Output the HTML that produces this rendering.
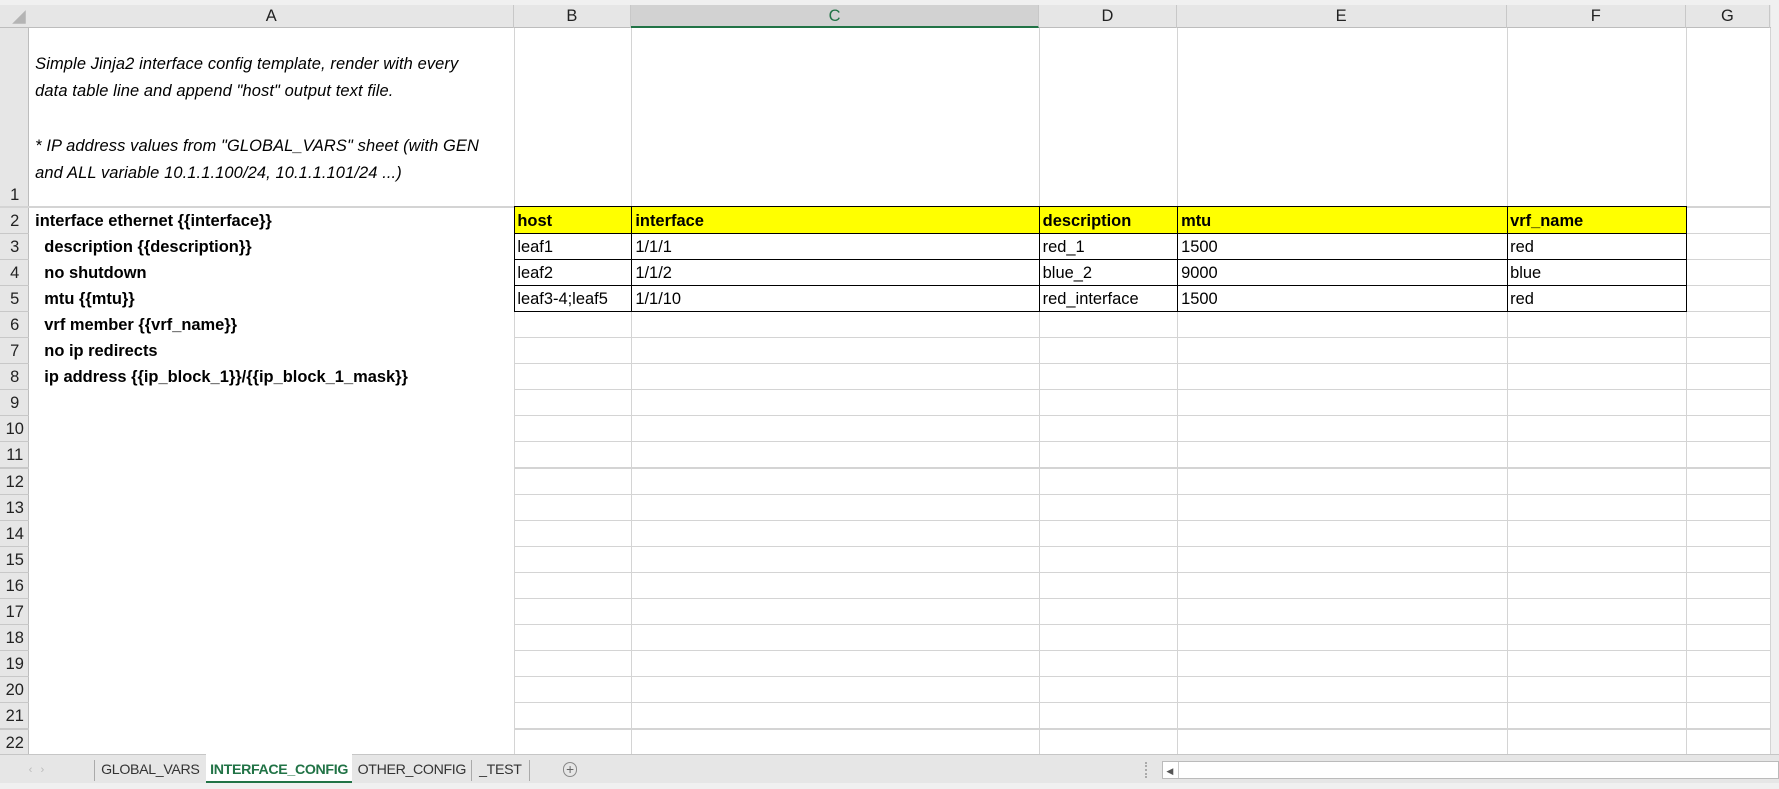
<!DOCTYPE html>
<html><head><meta charset="utf-8"><style>
html,body{margin:0;padding:0;background:#fff;overflow:hidden}
#w{position:relative;width:1568px;height:695px;zoom:1.13457;font-family:"Liberation Sans",sans-serif;font-size:14.5px;color:#000;overflow:hidden}
.a{position:absolute;box-sizing:border-box}
.vl{position:absolute;width:1px;background:#d4d4d4}
.hl{position:absolute;height:1px;background:#d4d4d4}
.rh{position:absolute;left:0;width:26px;text-align:center;font-size:14.5px;color:#222;line-height:23px}
.ch{position:absolute;top:4px;height:21px;line-height:21px;text-align:center;font-size:14.5px;color:#222;border-right:1px solid #c8c8c8;box-sizing:border-box}
.t{position:absolute;white-space:nowrap;line-height:23px}
.b{font-weight:bold}
.tab{position:absolute;top:668px;height:22px;line-height:22px;font-size:12.5px;color:#333;text-align:center;letter-spacing:-0.3px}
</style></head><body><div id="w">
<div class="a" style="left:0;top:0;width:1568px;height:4px;background:#f0f0f0"></div>
<div class="a" style="left:0;top:4px;width:1568px;height:21px;background:#e6e6e6;border-bottom:1px solid #bdbdbd"></div>
<div class="a" style="left:0;top:25px;width:26px;height:640px;background:#e6e6e6;border-right:1px solid #bdbdbd"></div>
<svg class="a" style="left:10px;top:8px" width="14" height="14"><polygon points="13,1 13,13 1,13" fill="#b4b4b4"/></svg>
<div class="ch" style="left:26px;width:427px">A</div>
<div class="ch" style="left:453px;width:103px">B</div>
<div class="ch" style="left:556px;width:360px;background:#d2d2d2;color:#217346;border-bottom:2px solid #217346">C</div>
<div class="ch" style="left:916px;width:121px">D</div>
<div class="ch" style="left:1037px;width:291px">E</div>
<div class="ch" style="left:1328px;width:158px">F</div>
<div class="ch" style="left:1486px;width:74px">G</div>
<div class="vl" style="left:453px;top:25px;height:640px"></div>
<div class="vl" style="left:556px;top:25px;height:640px"></div>
<div class="vl" style="left:916px;top:25px;height:640px"></div>
<div class="vl" style="left:1037px;top:25px;height:640px"></div>
<div class="vl" style="left:1328px;top:25px;height:640px"></div>
<div class="vl" style="left:1486px;top:25px;height:640px"></div>
<div class="vl" style="left:1560px;top:25px;height:640px"></div>
<div class="a" style="left:1561px;top:0;width:7px;height:695px;background:#f0f0f0"></div>
<div class="hl" style="left:0;top:182px;width:1560px"></div>
<div id="rows"></div>
<script>
var h='';for(var i=2;i<=22;i++){var y=182+(i-2)*23;h+='<div class="hl" style="left:453px;top:'+(y+23)+'px;width:1107px"></div><div class="hl" style="left:0;top:'+(y+23)+'px;width:26px;background:#c8c8c8"></div><div class="rh" style="top:'+(y+1)+'px">'+i+'</div>';}
document.getElementById('rows').innerHTML=h;
</script>
<div class="rh" style="top:160px">1</div>
<div class="t" style="left:31px;top:45px;font-style:italic;line-height:24px;letter-spacing:0.1px">Simple Jinja2 interface config template, render with every<br>data table line and append "host" output text file.<br><br>* IP address values from "GLOBAL_VARS" sheet (with GEN<br>and ALL variable 10.1.1.100/24, 10.1.1.101/24 ...)</div>
<div class="t b" style="left:31px;top:183px;line-height:23px">interface ethernet {{interface}}<br>&nbsp; description {{description}}<br>&nbsp; no shutdown<br>&nbsp; mtu {{mtu}}<br>&nbsp; vrf member {{vrf_name}}<br>&nbsp; no ip redirects<br>&nbsp; ip address {{ip_block_1}}/{{ip_block_1_mask}}</div>
<div class="a" style="left:453px;top:182px;width:1034px;height:23px;background:#ffff00"></div>
<div class="a" style="left:453px;top:182px;width:1034px;height:93px;border:1px solid #000"></div>
<div class="a" style="left:453px;top:205px;width:1034px;height:1px;background:#000"></div>
<div class="a" style="left:453px;top:228px;width:1034px;height:1px;background:#000"></div>
<div class="a" style="left:453px;top:251px;width:1034px;height:1px;background:#000"></div>
<div class="a" style="left:556px;top:182px;width:1px;height:93px;background:#000"></div>
<div class="a" style="left:916px;top:182px;width:1px;height:93px;background:#000"></div>
<div class="a" style="left:1037px;top:182px;width:1px;height:93px;background:#000"></div>
<div class="a" style="left:1328px;top:182px;width:1px;height:93px;background:#000"></div>
<div class="t b" style="left:456px;top:183px">host</div>
<div class="t b" style="left:560px;top:183px">interface</div>
<div class="t b" style="left:919px;top:183px">description</div>
<div class="t b" style="left:1041px;top:183px">mtu</div>
<div class="t b" style="left:1331px;top:183px">vrf_name</div>
<div class="t" style="left:456px;top:206px">leaf1<br>leaf2<br>leaf3-4;leaf5</div>
<div class="t" style="left:560px;top:206px">1/1/1<br>1/1/2<br>1/1/10</div>
<div class="t" style="left:919px;top:206px">red_1<br>blue_2<br>red_interface</div>
<div class="t" style="left:1041px;top:206px">1500<br>9000<br>1500</div>
<div class="t" style="left:1331px;top:206px">red<br>blue<br>red</div>
<div class="a" style="left:0;top:665px;width:1568px;height:30px;background:#e6e6e6;border-top:1px solid #c6c6c6"></div>
<div class="a" style="left:0;top:690px;width:1568px;height:5px;background:#f0f0f0"></div>
<div class="tab" style="left:12px;width:40px;color:#bbb;font-size:10px">‹ &nbsp; ›</div>
<div class="a" style="left:83px;top:670px;width:1px;height:18px;background:#aaa"></div>
<div class="tab" style="left:84px;width:97px">GLOBAL_VARS</div>
<div class="a" style="left:182px;top:665px;width:128px;height:25px;background:#fff;border-bottom:2px solid #217346"></div>
<div class="tab" style="left:182px;width:128px;color:#217346;font-weight:bold">INTERFACE_CONFIG</div>
<div class="tab" style="left:311px;width:104px">OTHER_CONFIG</div>
<div class="a" style="left:415px;top:670px;width:1px;height:18px;background:#aaa"></div>
<div class="tab" style="left:416px;width:50px">_TEST</div>
<div class="a" style="left:466px;top:670px;width:1px;height:18px;background:#aaa"></div>
<div class="a" style="left:496px;top:672px;width:13px;height:13px;border:1px solid #888;border-radius:50%;text-align:center;line-height:12px;font-size:12px;color:#666">+</div>
<div class="a" style="left:1009px;top:672px;width:2px;height:14px;border-left:2px dotted #aaa"></div>
<div class="a" style="left:1024px;top:671px;width:544px;height:16px;background:#fff;border:1px solid #bbb"></div>
<div class="a" style="left:1038px;top:672px;width:1px;height:14px;background:#ccc"></div>
<div class="a" style="left:1028px;top:675px;font-size:8px;color:#555">◀</div>
</div></body></html>
